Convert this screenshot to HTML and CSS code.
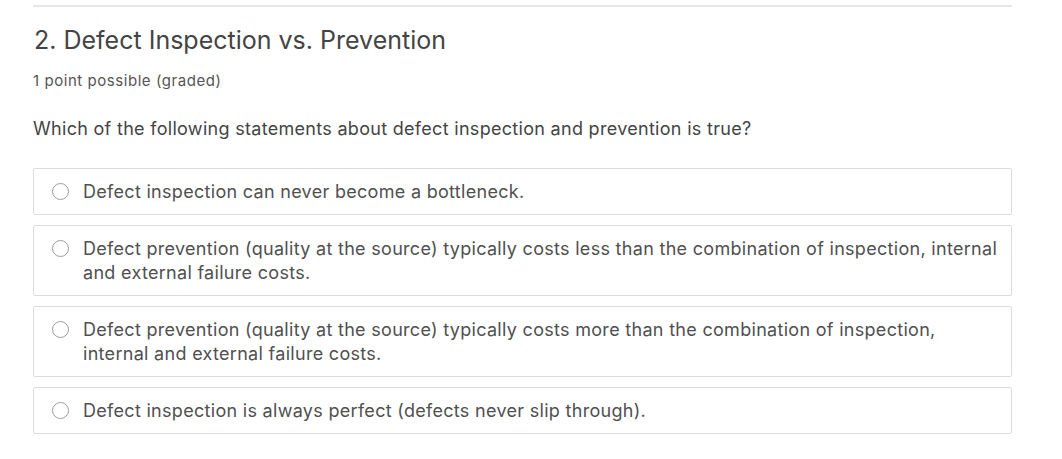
FILE: index.html
```html
<!DOCTYPE html>
<html>
<head>
<meta charset="utf-8">
<link rel="stylesheet" href="styles.css">
</head>
<body>
<div class="problem">
  <h2 class="title">2. Defect Inspection vs. Prevention</h2>
  <div class="meta">1 point possible (graded)</div>
  <p class="question">Which of the following statements about defect inspection and prevention is true?</p>
  <div class="options">
    <label class="option"><span class="radio"></span><span class="text">Defect inspection can never become a bottleneck.</span></label>
    <label class="option"><span class="radio"></span><span class="text">Defect prevention (quality at the source) typically costs less than the combination of inspection, internal and external failure costs.</span></label>
    <label class="option"><span class="radio"></span><span class="text">Defect prevention (quality at the source) typically costs more than the combination of inspection, internal and external failure costs.</span></label>
    <label class="option"><span class="radio"></span><span class="text">Defect inspection is always perfect (defects never slip through).</span></label>
  </div>
</div>
</body>
</html>
```
FILE: styles.css
```css
html, body {
  margin: 0;
  padding: 0;
  background: #fff;
}
body {
  font-family: Inter, "Liberation Sans", sans-serif;
  color: #4a4a4a;
}
.problem {
  margin: 5px 50px 0 33px;
  border-top: 2px solid #e6e6e6;
  padding-top: 17px;
}
.title {
  margin: 0;
  font-size: 25px;
  font-weight: 400;
  line-height: 32px;
  color: #444;
  padding-left: 1px;
}
.meta {
  margin-top: 15px;
  font-size: 15px;
  letter-spacing: 0.55px;
  line-height: 20px;
  color: #555;
}
.question {
  margin: 26px 0 0 0;
  font-size: 18px;
  letter-spacing: 0.3px;
  line-height: 24px;
  color: #444;
}
.options {
  margin-top: 27px;
  display: flex;
  flex-direction: column;
  gap: 10px;
}
.option {
  display: flex;
  align-items: flex-start;
  border: 1px solid #dcdcdc;
  border-radius: 2px;
  padding: 11px 8px 10px 18px;
  font-size: 18px;
  letter-spacing: 0.3px;
  line-height: 24px;
  color: #505050;
}
.radio {
  flex: none;
  width: 17px;
  height: 17px;
  border: 1.5px solid #9c9c9c;
  border-radius: 50%;
  margin-top: 3px;
  margin-right: 14px;
  box-sizing: border-box;
}
.text {
  flex: 1;
}
```
